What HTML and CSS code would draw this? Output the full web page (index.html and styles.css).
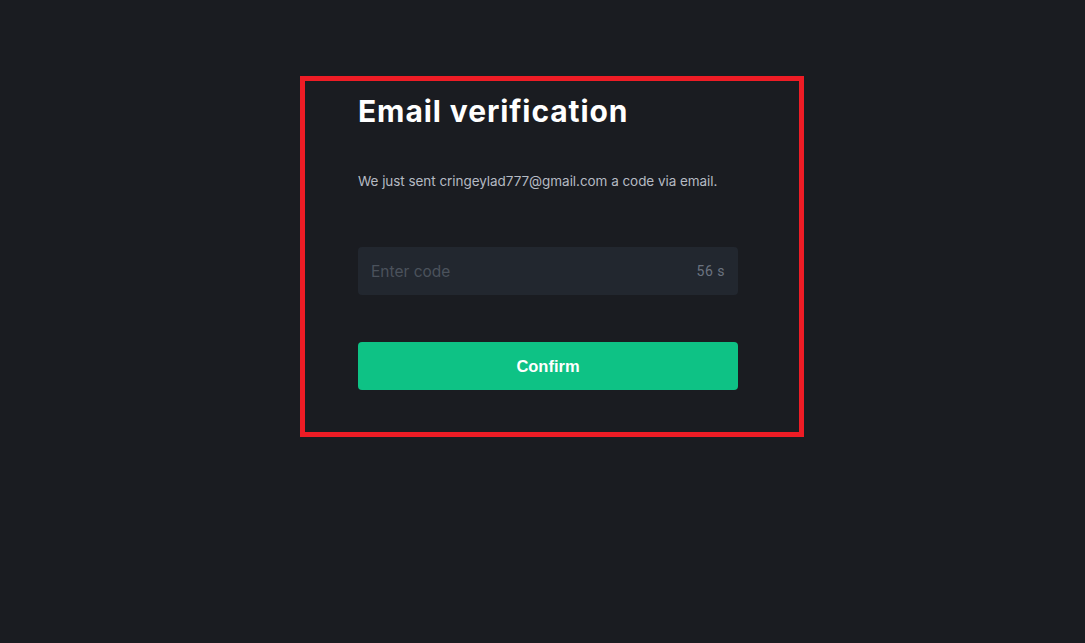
FILE: index.html
```html
<!DOCTYPE html>
<html lang="en">
<head>
<meta charset="utf-8">
<title>Email verification</title>
<link rel="stylesheet" href="styles.css">
</head>
<body>
<main class="page">
  <section class="card">
    <h1 class="title">Email verification</h1>
    <p class="subtitle">We just sent cringeylad777@gmail.com a code via email.</p>
    <div class="field">
      <input class="code-input" type="text" placeholder="Enter code">
      <span class="timer">56 s</span>
    </div>
    <button class="confirm" type="button">Confirm</button>
  </section>
</main>
</body>
</html>
```
FILE: styles.css
```css
html, body {
  margin: 0;
  padding: 0;
  background: #1a1c21;
  height: 100%;
}
body {
  font-family: "Inter", "Noto Sans", sans-serif;
  color: #ffffff;
}
.page {
  padding-top: 76px;
  padding-left: 300px;
}
.card {
  box-sizing: border-box;
  width: 504px;
  height: 361px;
  border: 5px solid #ee1c25;
  padding: 12px 0 0 53px;
  display: flex;
  flex-direction: column;
}
.title {
  margin: 0;
  font-size: 30px;
  font-weight: 700;
  line-height: 36px;
  letter-spacing: 0.9px;
  color: #ffffff;
}
.subtitle {
  margin: 42px 0 0;
  font-size: 13.5px;
  line-height: 20px;
  color: #b5bac3;
  letter-spacing: -0.05px;
}
.field {
  margin-top: 56px;
  width: 380px;
  height: 48px;
  background: #22272f;
  border-radius: 4px;
  display: flex;
  align-items: center;
  padding: 0 13px;
  box-sizing: border-box;
}
.code-input {
  flex: 1;
  min-width: 0;
  background: transparent;
  border: none;
  outline: none;
  padding: 0;
  font-family: "Inter", "Noto Sans", sans-serif;
  font-size: 15.5px;
  color: #ffffff;
}
.code-input::placeholder {
  color: #4b525c;
}
.timer {
  font-family: "Roboto", sans-serif;
  font-size: 14px;
  color: #6b7380;
  letter-spacing: 0.5px;
}
.confirm {
  margin-top: 47px;
  width: 380px;
  height: 48px;
  border: none;
  border-radius: 4px;
  background: #0ec285;
  color: #ffffff;
  font-family: "Liberation Sans", Arial, sans-serif;
  font-weight: 700;
  font-size: 16.5px;
  cursor: pointer;
}
```
